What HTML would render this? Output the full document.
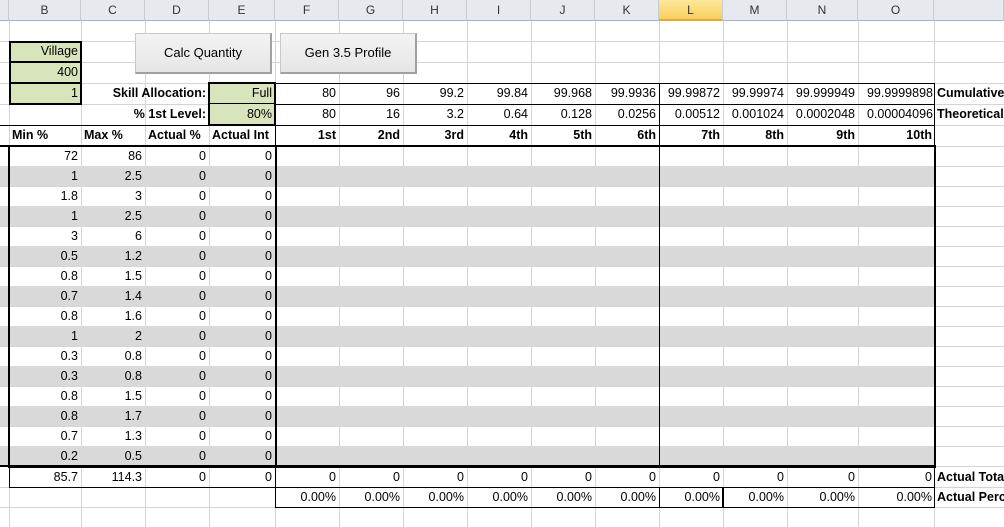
<!DOCTYPE html>
<html><head><style>
body{margin:0;width:1004px;height:527px;overflow:hidden;background:#fff;font-family:"Liberation Sans",sans-serif;font-size:12.5px;color:#000;position:relative}
div{position:absolute;box-sizing:border-box}
.c{height:20px;line-height:21px;text-align:right;padding-right:3px;white-space:nowrap}
.b{font-weight:bold}
.l{text-align:left;padding-left:3px}
.v{top:21px;bottom:0;width:1px;background:#d4d4d4}
.h{left:0;right:0;height:1px;background:#d4d4d4}
.g{left:0;width:934px;height:20px;background:#d9d9d9}
.hd{top:0;height:21px;line-height:21px;text-align:center;background:#e6e9ee;border-right:1px solid #c5cbd3;border-bottom:1px solid #9eb6ce;color:#333;font-size:12px}
.btn{background:linear-gradient(#f3f3f3,#e6e6e6);border:1px solid #c8c8c8;border-right:2px solid #a0a0a0;border-bottom:2px solid #a0a0a0;text-align:center;line-height:38px;font-size:13px}
</style></head><body>
<!-- gridlines -->
<div class="v" style="left:9px"></div><div class="v" style="left:81px"></div><div class="v" style="left:145px"></div><div class="v" style="left:209px"></div><div class="v" style="left:275px"></div><div class="v" style="left:339px"></div><div class="v" style="left:403px"></div><div class="v" style="left:467px"></div><div class="v" style="left:531px"></div><div class="v" style="left:595px"></div><div class="v" style="left:659px"></div><div class="v" style="left:723px"></div><div class="v" style="left:787px"></div><div class="v" style="left:858px"></div><div class="v" style="left:934px"></div>
<div class="h" style="top:41px"></div><div class="h" style="top:62px"></div><div class="h" style="top:83px"></div><div class="h" style="top:104px"></div><div class="h" style="top:125px"></div><div class="h" style="top:146px"></div><div class="h" style="top:166px"></div><div class="h" style="top:186px"></div><div class="h" style="top:206px"></div><div class="h" style="top:226px"></div><div class="h" style="top:246px"></div><div class="h" style="top:266px"></div><div class="h" style="top:286px"></div><div class="h" style="top:306px"></div><div class="h" style="top:326px"></div><div class="h" style="top:346px"></div><div class="h" style="top:366px"></div><div class="h" style="top:386px"></div><div class="h" style="top:406px"></div><div class="h" style="top:426px"></div><div class="h" style="top:446px"></div><div class="h" style="top:466px"></div><div class="h" style="top:487px"></div><div class="h" style="top:507px"></div>
<!-- stripes -->
<div class="g" style="top:166px"></div><div class="g" style="top:206px"></div><div class="g" style="top:246px"></div><div class="g" style="top:286px"></div><div class="g" style="top:326px"></div><div class="g" style="top:366px"></div><div class="g" style="top:406px"></div><div class="g" style="top:446px"></div>
<!-- column headers -->
<div class="hd" style="left:0;width:9px"></div>
<div class="hd" style="left:9px;width:72px">B</div><div class="hd" style="left:81px;width:64px">C</div><div class="hd" style="left:145px;width:64px">D</div><div class="hd" style="left:209px;width:66px">E</div><div class="hd" style="left:275px;width:64px">F</div><div class="hd" style="left:339px;width:64px">G</div><div class="hd" style="left:403px;width:64px">H</div><div class="hd" style="left:467px;width:64px">I</div><div class="hd" style="left:531px;width:64px">J</div><div class="hd" style="left:595px;width:64px">K</div>
<div class="hd" style="left:659px;width:64px;background:linear-gradient(#fde89a,#f8cf5c);border-bottom:2px solid #e2a838">L</div>
<div class="hd" style="left:723px;width:64px">M</div><div class="hd" style="left:787px;width:71px">N</div><div class="hd" style="left:858px;width:76px">O</div><div class="hd" style="left:934px;width:70px"></div>
<!-- green cells -->
<div style="left:9px;top:41px;width:73px;height:64px;background:#d8e4bc;border:2px solid #000"></div>
<div style="left:9px;top:61px;width:73px;height:2px;background:#000"></div><div style="left:9px;top:82px;width:73px;height:2px;background:#000"></div>
<div class="c" style="left:9px;top:41px;width:72px">Village</div>
<div class="c" style="left:9px;top:62px;width:72px">400</div>
<div class="c" style="left:9px;top:83px;width:72px">1</div>
<div style="left:208px;top:82px;width:68px;height:44px;background:#d8e4bc;border:2px solid #000"></div>
<div style="left:210px;top:103px;width:65px;height:1px;background:#000"></div>
<div class="c" style="left:209px;top:83px;width:66px">Full</div>
<div class="c" style="left:209px;top:104px;width:66px">80%</div>
<div class="c b" style="left:81px;top:83px;width:128px">Skill Allocation:</div>
<div class="c b" style="left:81px;top:104px;width:128px">% 1st Level:</div>
<!-- buttons -->
<div class="btn" style="left:135px;top:33px;width:137px;height:41px">Calc Quantity</div>
<div class="btn" style="left:280px;top:33px;width:137px;height:41px">Gen 3.5 Profile</div>
<!-- top F-O box -->
<div style="left:275px;top:83px;width:660px;height:64px;border:1px solid #000;border-bottom:2px solid #000"></div>
<div style="left:275px;top:104px;width:660px;height:1px;background:#000"></div>
<div style="left:275px;top:125px;width:660px;height:1px;background:#000"></div>
<div style="left:659px;top:83px;width:1px;height:63px;background:#000"></div>
<div style="left:0;top:125px;width:275px;height:1px;background:#000"></div>
<div style="left:0;top:145px;width:275px;height:2px;background:#000"></div>
<div class="c" style="left:275px;top:83px;width:64px">80</div><div class="c" style="left:339px;top:83px;width:64px">96</div><div class="c" style="left:403px;top:83px;width:64px">99.2</div><div class="c" style="left:467px;top:83px;width:64px">99.84</div><div class="c" style="left:531px;top:83px;width:64px">99.968</div><div class="c" style="left:595px;top:83px;width:64px">99.9936</div><div class="c" style="left:659px;top:83px;width:64px">99.99872</div><div class="c" style="left:723px;top:83px;width:64px">99.99974</div><div class="c" style="left:787px;top:83px;width:71px">99.999949</div><div class="c" style="left:858px;top:83px;width:77px;padding-right:2px">99.9999898</div>
<div class="c b l" style="left:934px;top:83px;width:80px">Cumulative</div>
<div class="c" style="left:275px;top:104px;width:64px">80</div><div class="c" style="left:339px;top:104px;width:64px">16</div><div class="c" style="left:403px;top:104px;width:64px">3.2</div><div class="c" style="left:467px;top:104px;width:64px">0.64</div><div class="c" style="left:531px;top:104px;width:64px">0.128</div><div class="c" style="left:595px;top:104px;width:64px">0.0256</div><div class="c" style="left:659px;top:104px;width:64px">0.00512</div><div class="c" style="left:723px;top:104px;width:64px">0.001024</div><div class="c" style="left:787px;top:104px;width:71px">0.0002048</div><div class="c" style="left:858px;top:104px;width:77px;padding-right:2px">0.00004096</div>
<div class="c b l" style="left:934px;top:104px;width:80px">Theoretical</div>
<!-- header row -->
<div class="c b l" style="left:9px;top:125px;width:72px">Min %</div><div class="c b l" style="left:81px;top:125px;width:64px">Max %</div><div class="c b l" style="left:145px;top:125px;width:64px">Actual %</div><div class="c b l" style="left:209px;top:125px;width:66px">Actual Int</div>
<div class="c b" style="left:275px;top:125px;width:64px">1st</div><div class="c b" style="left:339px;top:125px;width:64px">2nd</div><div class="c b" style="left:403px;top:125px;width:64px">3rd</div><div class="c b" style="left:467px;top:125px;width:64px">4th</div><div class="c b" style="left:531px;top:125px;width:64px">5th</div><div class="c b" style="left:595px;top:125px;width:64px">6th</div><div class="c b" style="left:659px;top:125px;width:64px">7th</div><div class="c b" style="left:723px;top:125px;width:64px">8th</div><div class="c b" style="left:787px;top:125px;width:71px">9th</div><div class="c b" style="left:858px;top:125px;width:77px">10th</div>
<!-- data boxes -->
<div style="left:8px;top:145px;width:269px;height:323px;border:2px solid #000"></div>
<div style="left:275px;top:145px;width:661px;height:323px;border:2px solid #000"></div>
<div style="left:659px;top:146px;width:1px;height:321px;background:#000"></div>
<div style="left:0;top:465px;width:936px;height:2px;background:#000"></div>
<!-- data -->
<div class="c" style="left:9px;top:146px;width:72px">72</div><div class="c" style="left:81px;top:146px;width:64px">86</div><div class="c" style="left:145px;top:146px;width:64px">0</div><div class="c" style="left:209px;top:146px;width:66px">0</div>
<div class="c" style="left:9px;top:166px;width:72px">1</div><div class="c" style="left:81px;top:166px;width:64px">2.5</div><div class="c" style="left:145px;top:166px;width:64px">0</div><div class="c" style="left:209px;top:166px;width:66px">0</div>
<div class="c" style="left:9px;top:186px;width:72px">1.8</div><div class="c" style="left:81px;top:186px;width:64px">3</div><div class="c" style="left:145px;top:186px;width:64px">0</div><div class="c" style="left:209px;top:186px;width:66px">0</div>
<div class="c" style="left:9px;top:206px;width:72px">1</div><div class="c" style="left:81px;top:206px;width:64px">2.5</div><div class="c" style="left:145px;top:206px;width:64px">0</div><div class="c" style="left:209px;top:206px;width:66px">0</div>
<div class="c" style="left:9px;top:226px;width:72px">3</div><div class="c" style="left:81px;top:226px;width:64px">6</div><div class="c" style="left:145px;top:226px;width:64px">0</div><div class="c" style="left:209px;top:226px;width:66px">0</div>
<div class="c" style="left:9px;top:246px;width:72px">0.5</div><div class="c" style="left:81px;top:246px;width:64px">1.2</div><div class="c" style="left:145px;top:246px;width:64px">0</div><div class="c" style="left:209px;top:246px;width:66px">0</div>
<div class="c" style="left:9px;top:266px;width:72px">0.8</div><div class="c" style="left:81px;top:266px;width:64px">1.5</div><div class="c" style="left:145px;top:266px;width:64px">0</div><div class="c" style="left:209px;top:266px;width:66px">0</div>
<div class="c" style="left:9px;top:286px;width:72px">0.7</div><div class="c" style="left:81px;top:286px;width:64px">1.4</div><div class="c" style="left:145px;top:286px;width:64px">0</div><div class="c" style="left:209px;top:286px;width:66px">0</div>
<div class="c" style="left:9px;top:306px;width:72px">0.8</div><div class="c" style="left:81px;top:306px;width:64px">1.6</div><div class="c" style="left:145px;top:306px;width:64px">0</div><div class="c" style="left:209px;top:306px;width:66px">0</div>
<div class="c" style="left:9px;top:326px;width:72px">1</div><div class="c" style="left:81px;top:326px;width:64px">2</div><div class="c" style="left:145px;top:326px;width:64px">0</div><div class="c" style="left:209px;top:326px;width:66px">0</div>
<div class="c" style="left:9px;top:346px;width:72px">0.3</div><div class="c" style="left:81px;top:346px;width:64px">0.8</div><div class="c" style="left:145px;top:346px;width:64px">0</div><div class="c" style="left:209px;top:346px;width:66px">0</div>
<div class="c" style="left:9px;top:366px;width:72px">0.3</div><div class="c" style="left:81px;top:366px;width:64px">0.8</div><div class="c" style="left:145px;top:366px;width:64px">0</div><div class="c" style="left:209px;top:366px;width:66px">0</div>
<div class="c" style="left:9px;top:386px;width:72px">0.8</div><div class="c" style="left:81px;top:386px;width:64px">1.5</div><div class="c" style="left:145px;top:386px;width:64px">0</div><div class="c" style="left:209px;top:386px;width:66px">0</div>
<div class="c" style="left:9px;top:406px;width:72px">0.8</div><div class="c" style="left:81px;top:406px;width:64px">1.7</div><div class="c" style="left:145px;top:406px;width:64px">0</div><div class="c" style="left:209px;top:406px;width:66px">0</div>
<div class="c" style="left:9px;top:426px;width:72px">0.7</div><div class="c" style="left:81px;top:426px;width:64px">1.3</div><div class="c" style="left:145px;top:426px;width:64px">0</div><div class="c" style="left:209px;top:426px;width:66px">0</div>
<div class="c" style="left:9px;top:446px;width:72px">0.2</div><div class="c" style="left:81px;top:446px;width:64px">0.5</div><div class="c" style="left:145px;top:446px;width:64px">0</div><div class="c" style="left:209px;top:446px;width:66px">0</div>
<!-- totals -->
<div style="left:9px;top:467px;width:267px;height:21px;border:1px solid #000;border-top:none"></div>
<div style="left:275px;top:467px;width:660px;height:41px;border:1px solid #000;border-top:none"></div>
<div style="left:275px;top:487px;width:660px;height:1px;background:#000"></div>
<div style="left:659px;top:487px;width:65px;height:21px;border:1px solid #000;border-right:2px solid #000"></div>
<div class="c" style="left:9px;top:467px;width:72px">85.7</div><div class="c" style="left:81px;top:467px;width:64px">114.3</div><div class="c" style="left:145px;top:467px;width:64px">0</div><div class="c" style="left:209px;top:467px;width:66px">0</div>
<div class="c" style="left:275px;top:467px;width:64px">0</div><div class="c" style="left:339px;top:467px;width:64px">0</div><div class="c" style="left:403px;top:467px;width:64px">0</div><div class="c" style="left:467px;top:467px;width:64px">0</div><div class="c" style="left:531px;top:467px;width:64px">0</div><div class="c" style="left:595px;top:467px;width:64px">0</div><div class="c" style="left:659px;top:467px;width:64px">0</div><div class="c" style="left:723px;top:467px;width:64px">0</div><div class="c" style="left:787px;top:467px;width:71px">0</div><div class="c" style="left:858px;top:467px;width:77px">0</div>
<div class="c b l" style="left:934px;top:467px;width:80px">Actual Total</div>
<div class="c" style="left:275px;top:487px;width:64px">0.00%</div><div class="c" style="left:339px;top:487px;width:64px">0.00%</div><div class="c" style="left:403px;top:487px;width:64px">0.00%</div><div class="c" style="left:467px;top:487px;width:64px">0.00%</div><div class="c" style="left:531px;top:487px;width:64px">0.00%</div><div class="c" style="left:595px;top:487px;width:64px">0.00%</div><div class="c" style="left:659px;top:487px;width:64px">0.00%</div><div class="c" style="left:723px;top:487px;width:64px">0.00%</div><div class="c" style="left:787px;top:487px;width:71px">0.00%</div><div class="c" style="left:858px;top:487px;width:77px">0.00%</div>
<div class="c b l" style="left:934px;top:487px;width:80px">Actual Perc</div>
</body></html>
